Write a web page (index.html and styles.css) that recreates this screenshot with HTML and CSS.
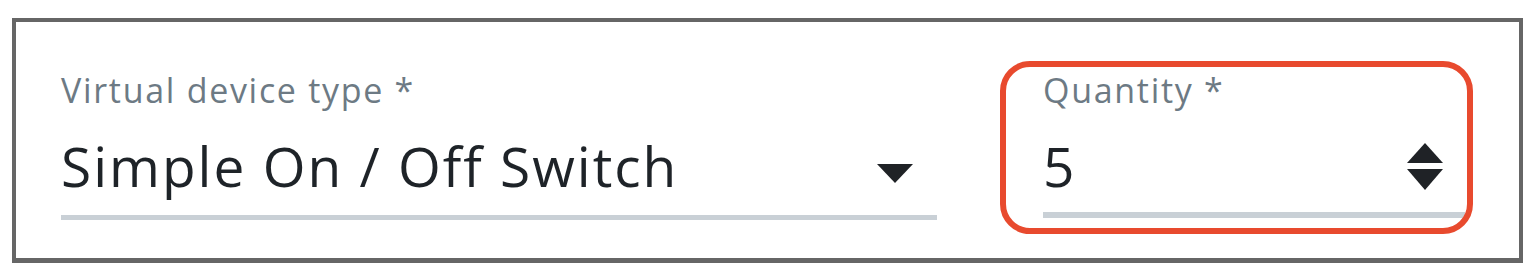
FILE: index.html
```html
<!DOCTYPE html>
<html lang="en">
<head>
<meta charset="utf-8">
<title>Virtual device</title>
<link rel="stylesheet" href="styles.css">
</head>
<body>
<div class="frame">
  <div class="fields">
    <div class="field field-type">
      <div class="label">Virtual device type *</div>
      <div class="value-row">
        <span class="value">Simple On / Off Switch</span>
        <svg class="caret" width="36" height="19" viewBox="0 0 36 19"><polygon points="0,0 36,0 18,19" fill="#1f2226"/></svg>
      </div>
    </div>
    <div class="field field-qty">
      <div class="label">Quantity *</div>
      <div class="value-row">
        <span class="value">5</span>
        <svg class="spinner" width="36" height="47" viewBox="0 0 36 47"><polygon points="0,20 18,0 36,20" fill="#1f2226"/><polygon points="0,26 36,26 18,47" fill="#1f2226"/></svg>
      </div>
      <div class="highlight"></div>
    </div>
  </div>
</div>
</body>
</html>
```
FILE: styles.css
```css
html, body {
  margin: 0;
  padding: 0;
  background: #ffffff;
}

body {
  font-family: "Open Sans", Lato, "Liberation Sans", sans-serif;
}

.frame {
  margin: 18px 0 0 12px;
  width: 1458px;
  border: 4px solid #666666;
  border-bottom-width: 5px;
  padding: 51px 0 38px 45px;
  box-sizing: content-box;
  height: 147px;
  background: #ffffff;
}

.fields {
  display: flex;
  align-items: flex-start;
}

.field {
  display: flex;
  flex-direction: column;
}

.field-type {
  width: 876px;
}

.field-qty {
  position: relative;
  width: 422px;
  margin-left: 106px;
}

.label {
  font-size: 34px;
  line-height: 34px;
  letter-spacing: 1.7px;
  color: #6d7a84;
  white-space: nowrap;
}

.value-row {
  display: flex;
  align-items: center;
  justify-content: space-between;
  margin-top: 32px;
  padding-bottom: 22px;
  border-bottom: 5px solid #c9d0d6;
}

.field-qty .value-row {
  padding-bottom: 19px;
  border-bottom-width: 6px;
}

.value {
  font-size: 55px;
  line-height: 54px;
  letter-spacing: 2px;
  color: #1e2328;
  white-space: nowrap;
}

.caret {
  display: block;
  margin-top: 15px;
  margin-right: 24px;
}

.spinner {
  display: block;
  margin-top: 1px;
  margin-right: 22px;
}

.highlight {
  position: absolute;
  left: -43px;
  top: -12px;
  right: -8px;
  bottom: -16px;
  border: 6px solid #e84a2e;
  border-radius: 30px;
}
```
